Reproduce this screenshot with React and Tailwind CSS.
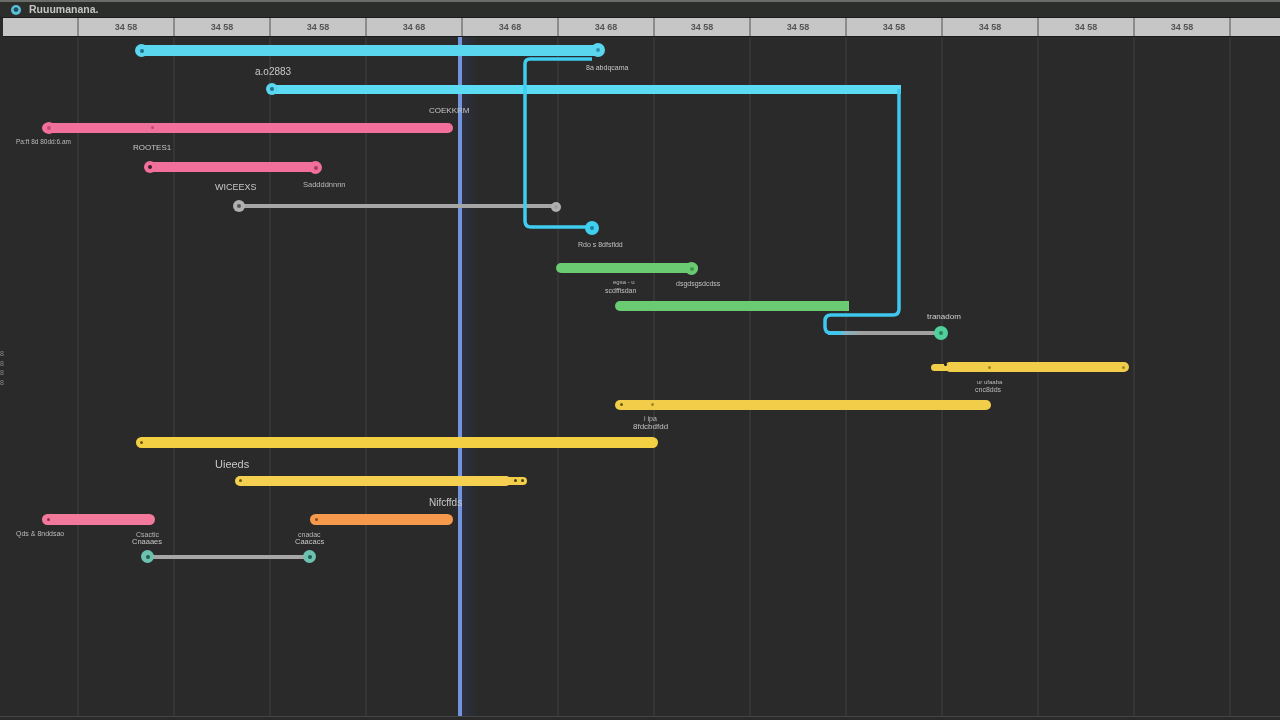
const font = { fontFamily: '"Liberation Sans", Arial, sans-serif' };

const headers = ['34 58','34 58','34 58','34 68','34 68','34 68','34 58','34 58','34 58','34 58','34 58','34 58'];

const bars = [
  { c: 'left-[136px] top-[8px] w-[465px] h-[11px] bg-[#5ad7ee]' },
  { c: 'left-[267px] top-[48px] w-[634px] h-[9px] bg-[#5cdcf4] rounded-r-[2px]' },
  { c: 'left-[42px] top-[86px] w-[411px] h-[10px] bg-[#f0709b]' },
  { c: 'left-[145px] top-[125px] w-[175px] h-[10px] bg-[#f0709b]' },
  { c: 'left-[236px] top-[167px] w-[322px] h-[4px] bg-[#a6a6a6]' },
  { c: 'left-[556px] top-[226px] w-[142px] h-[10px] bg-[#6bcb72]' },
  { c: 'left-[615px] top-[264px] w-[234px] h-[10px] bg-[#6bcb72] rounded-r-[1px]' },
  { c: 'left-[828px] top-[294px] w-[110px] h-[4px] rounded-none bg-linear-to-r from-[#3fc8ee] via-[#a0a0a0] via-30% to-[#a0a0a0]' },
  { c: 'left-[931px] top-[327px] w-[20px] h-[7px] bg-[#f2cd4a]' },
  { c: 'left-[945px] top-[325px] w-[184px] h-[10px] bg-[#f2cd4a]' },
  { c: 'left-[615px] top-[363px] w-[376px] h-[10px] bg-[#f2cd4a]' },
  { c: 'left-[136px] top-[400px] w-[522px] h-[11px] bg-[#f3d043]' },
  { c: 'left-[505px] top-[440px] w-[22px] h-[8px] bg-[#f2cd4a]' },
  { c: 'left-[235px] top-[439px] w-[276px] h-[10px] bg-[#f5cf50]' },
  { c: 'left-[42px] top-[477px] w-[113px] h-[11px] bg-[#f2789c]' },
  { c: 'left-[310px] top-[477px] w-[143px] h-[11px] bg-[#f59a4c]' },
  { c: 'left-[148px] top-[518px] w-[162px] h-[4px] bg-[#a6a6a6]' },
];

const dots = [
  { c: 'left-[135px] top-[7px] w-[13px] h-[13px] bg-[#5ad7ee]', i: 'bg-[#1e6f88]' },
  { c: 'left-[591px] top-[6px] w-[14px] h-[14px] bg-[#5ad7ee]', i: 'bg-[#2f93ad]' },
  { c: 'left-[266px] top-[46px] w-[12px] h-[12px] bg-[#5ad7ee]', i: 'bg-[#1e6f88]' },
  { c: 'left-[43px] top-[85px] w-[12px] h-[12px] bg-[#f0709b]', i: 'bg-[#c04a72]' },
  { c: 'left-[144px] top-[124px] w-[12px] h-[12px] bg-[#f0709b]', i: 'bg-[#3a2028]' },
  { c: 'left-[309px] top-[124px] w-[13px] h-[13px] bg-[#f0709b]', i: 'bg-[#a83a5e]' },
  { c: 'left-[233px] top-[163px] w-[12px] h-[12px] bg-[#b0b0b0]', i: 'bg-[#555555]' },
  { c: 'left-[551px] top-[165px] w-[10px] h-[10px] bg-[#b0b0b0]', i: 'bg-[#a0a0a0]' },
  { c: 'left-[585px] top-[184px] w-[14px] h-[14px] bg-[#3fd0f0]', i: 'bg-[#1e7f9c]' },
  { c: 'left-[685px] top-[225px] w-[13px] h-[13px] bg-[#6bcb72]', i: 'bg-[#3f9a4a]' },
  { c: 'left-[934px] top-[289px] w-[14px] h-[14px] bg-[#4fd09a]', i: 'bg-[#2c7f5e]' },
  { c: 'left-[141px] top-[513px] w-[13px] h-[13px] bg-[#6cc2ae]', i: 'bg-[#235c50]' },
  { c: 'left-[303px] top-[513px] w-[13px] h-[13px] bg-[#6cc2ae]', i: 'bg-[#235c50]' },
];

const specks = [
  'left-[151px] top-[89px] bg-[#c04a72]',
  'left-[47px] top-[481px] bg-[#8a2c4a]',
  'left-[315px] top-[481px] bg-[#8a4a1c]',
  'left-[620px] top-[366px] bg-[#6a5a10]',
  'left-[651px] top-[366px] bg-[#a08a20]',
  'left-[140px] top-[404px] bg-[#6a5a10]',
  'left-[239px] top-[442px] bg-[#6a5a10]',
  'left-[514px] top-[442px] bg-[#4a3f10]',
  'left-[521px] top-[442px] bg-[#4a3f10]',
  'left-[944px] top-[326px] bg-[#1e1e1e]',
  'left-[988px] top-[329px] bg-[#a08a20]',
  'left-[1122px] top-[329px] bg-[#a08a20]',
];

const labels = [
  { t: 'a.o2883', c: 'left-[255px] top-[30px] text-[10px] text-[#c8c8c8]' },
  { t: '8a abdqcama', c: 'left-[586px] top-[27px] text-[7px] text-[#c8c8c8]' },
  { t: 'COEKKRM', c: 'left-[429px] top-[70px] text-[8px] text-[#c8c8c8]' },
  { t: 'Pa:ft 8d 80dd:6.am', c: 'left-[16px] top-[102px] text-[6.5px] text-[#bbbbbb]' },
  { t: 'ROOTES1', c: 'left-[133px] top-[107px] text-[8px] text-[#c8c8c8]' },
  { t: 'WICEEXS', c: 'left-[215px] top-[146px] text-[9px] text-[#c8c8c8]' },
  { t: 'Saddddnnnn', c: 'left-[303px] top-[144px] text-[7.5px] text-[#b8b8b8]' },
  { t: 'Rdo s 8dfsfldd', c: 'left-[578px] top-[204px] text-[7px] text-[#c0c0c0]' },
  { t: 'egsa - u', c: 'left-[613px] top-[242px] text-[6px] text-[#bbbbbb]' },
  { t: 'scdffisdan', c: 'left-[605px] top-[250px] text-[7px] text-[#c0c0c0]' },
  { t: 'dsgdsgsdcdss', c: 'left-[676px] top-[243px] text-[7px] text-[#c0c0c0]' },
  { t: 'tranadom', c: 'left-[927px] top-[276px] text-[8px] text-[#d0d0d0]' },
  { t: 'ur ufaaba', c: 'left-[977px] top-[342px] text-[6px] text-[#bbbbbb]' },
  { t: 'cnc8dds', c: 'left-[975px] top-[349px] text-[7px] text-[#bbbbbb]' },
  { t: 'i ipa', c: 'left-[644px] top-[378px] text-[7px] text-[#bbbbbb]' },
  { t: '8fdcbdfdd', c: 'left-[633px] top-[386px] text-[8px] text-[#c0c0c0]' },
  { t: 'Uieeds', c: 'left-[215px] top-[422px] text-[11px] text-[#c8c8c8]' },
  { t: 'Nifcffds', c: 'left-[429px] top-[461px] text-[10px] text-[#c8c8c8]' },
  { t: 'Qds & 8nddsao', c: 'left-[16px] top-[493px] text-[7px] text-[#bbbbbb]' },
  { t: 'Csactic', c: 'left-[136px] top-[494px] text-[7px] text-[#b8b8b8]' },
  { t: 'Cnaaaes', c: 'left-[132px] top-[501px] text-[7.5px] text-[#c8c8c8]' },
  { t: 'cnadac', c: 'left-[298px] top-[494px] text-[7px] text-[#b8b8b8]' },
  { t: 'Caacacs', c: 'left-[295px] top-[501px] text-[7.5px] text-[#c8c8c8]' },
];

export default function App() {
  return (
    <div className="w-[1280px] h-[720px] overflow-hidden bg-[#2a2a2a]">
      <div style={font} className="w-[1280px] h-[720px] flex flex-col bg-[#2a2a2a] relative blur-[0.5px]">
        <div className="h-[18px] shrink-0 bg-[#2c2e2c] border-t-2 border-[#6a6c6a] flex items-center pl-[11px] gap-[8px] border-b border-b-[#1c1c1c]">
          <svg width="10" height="10" viewBox="0 0 10 10">
            <circle cx="5" cy="5" r="5" fill="#5cc0d8" />
            <circle cx="5" cy="4.6" r="2.4" fill="#1f5060" />
          </svg>
          <span className="text-[10.5px] text-[#c4c4c4] font-bold leading-none">Ruuumanana.</span>
        </div>

        <div className="h-[19px] shrink-0 ml-[3px] bg-[#c6c6c6] flex border-b border-[#1c1c1c]">
          <div className="w-[74px] shrink-0" />
          {headers.map((h, i) => (
            <div key={i} className="w-[96px] shrink-0 border-l-2 border-[#8c8c8c] flex items-center justify-center text-[9px] font-bold text-[#555555] leading-none">
              {h}
            </div>
          ))}
          <div className="flex-1 border-l-2 border-[#8c8c8c]" />
        </div>

        <div className="flex-1 relative">
          <div className="absolute left-0 right-0 top-0 bottom-[4px] flex pl-[77px]">
            {Array.from({ length: 13 }).map((_, i) => (
              <div key={i} className="w-[96px] shrink-0 border-l-2 border-[#353535]" />
            ))}
          </div>

          <div className="absolute left-[462px] top-0 bottom-[4px] w-[16px] bg-linear-to-r from-[#2d3142] to-[#2a2a2a]" />
          <div className="absolute left-[458px] top-0 bottom-[4px] w-[4px] bg-[#7294dc]" />
          <div className="absolute left-0 right-0 bottom-[3px] h-px bg-[#454545]" />

          {bars.map((b, i) => (
            <div key={i} className={'absolute rounded-full ' + b.c} />
          ))}

          <svg className="absolute left-0 top-0" width="1280" height="680" fill="none">
            <path d="M592 22 H530 Q525 22 525 27 V184 Q525 190 531 190 H588" stroke="#3fcdf0" strokeWidth="3.5" />
            <path d="M899 52 V272 Q899 278 893 278 H831 Q825 278 825 284 V290 Q825 296 831 296 H842" stroke="#3fc8ee" strokeWidth="3.5" />
          </svg>

          {dots.map((d, i) => (
            <div key={i} className={'absolute rounded-full flex items-center justify-center ' + d.c}>
              <div className={'w-[4px] h-[4px] rounded-full ' + d.i} />
            </div>
          ))}

          {specks.map((s, i) => (
            <div key={i} className={'absolute w-[3px] h-[3px] rounded-full ' + s} />
          ))}

          {labels.map((l, i) => (
            <div key={i} className={'absolute whitespace-nowrap leading-none ' + l.c}>{l.t}</div>
          ))}

          <div className="absolute left-0 top-[313px] w-[8px] h-[36px] flex flex-col justify-between text-[7px] leading-none text-[#888888]">
            <span>8</span>
            <span>8</span>
            <span>8</span>
            <span>8</span>
          </div>
        </div>
      </div>
    </div>
  );
}
